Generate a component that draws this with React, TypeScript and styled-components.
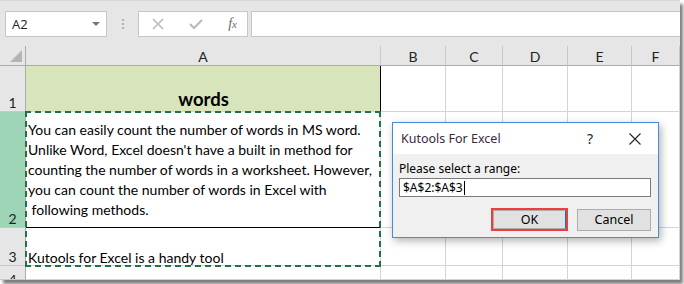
import styled, { createGlobalStyle } from 'styled-components'

const GlobalStyle = createGlobalStyle`
  html, body {
    margin: 0;
    padding: 0;
    background: #ffffff;
    overflow: hidden;
  }
  * { box-sizing: border-box; }
`

const columns = [
  { key: 'A', width: 355 },
  { key: 'B', width: 65 },
  { key: 'C', width: 57 },
  { key: 'D', width: 65 },
  { key: 'E', width: 64 },
  { key: 'F', width: 48 },
]

const rows = [
  { num: '1', height: 46 },
  { num: '2', height: 116 },
  { num: '3', height: 38 },
  { num: '4', height: 14 },
]

export default function App() {
  return (
    <>
      <GlobalStyle />
      <Frame>
        <Window>
          <FormulaBar>
            <NameBox>
              <span>A2</span>
              <DropArrow />
            </NameBox>
            <Grip>
              <i />
              <i />
              <i />
            </Grip>
            <IconBox>
              <svg width="12" height="12" viewBox="0 0 12 12">
                <path d="M1 1 L11 11 M11 1 L1 11" stroke="#b9b9b9" strokeWidth="1.5" fill="none" />
              </svg>
              <svg width="14" height="12" viewBox="0 0 14 12">
                <path d="M1 6 L5 10 L13 2" stroke="#b9b9b9" strokeWidth="2" fill="none" />
              </svg>
              <Fx>
                f<sub>x</sub>
              </Fx>
            </IconBox>
            <FormulaInput />
          </FormulaBar>

          <Sheet>
            <Corner $row={1} $col={1}>
              <svg width="12" height="12" viewBox="0 0 12 12">
                <path d="M12 0 L12 12 L0 12 Z" fill="#b4b4b4" />
              </svg>
            </Corner>
            {columns.map((c, ci) => (
              <ColHeader key={c.key} $row={1} $col={ci + 2}>
                {c.key}
              </ColHeader>
            ))}

            {rows.map((r, ri) => (
              <RowGroup key={r.num} num={r.num} row={ri + 2} />
            ))}

            <Marquee />
          </Sheet>

          <Dialog>
            <DialogTitle>
              <span>Kutools For Excel</span>
              <TitleButtons>
                <span>?</span>
                <svg width="12" height="12" viewBox="0 0 12 12">
                  <path d="M0.5 0.5 L11.5 11.5 M11.5 0.5 L0.5 11.5" stroke="#222" strokeWidth="1.1" fill="none" />
                </svg>
              </TitleButtons>
            </DialogTitle>
            <DialogBody>
              <Label>Please select a range:</Label>
              <RangeInput>
                $A$2:$A$3<Caret />
              </RangeInput>
              <ButtonRow>
                <Highlight>
                  <DialogButton $primary>OK</DialogButton>
                </Highlight>
                <DialogButton>Cancel</DialogButton>
              </ButtonRow>
            </DialogBody>
          </Dialog>
        </Window>
      </Frame>
    </>
  )
}

function RowGroup({ num, row }: { num: string; row: number }) {
  return (
    <>
      <RowHeader $row={row} $col={1} $selected={num === '2'} $clipped={num === '4'}>
        {num}
      </RowHeader>
      {columns.map((c, ci) => {
        const col = ci + 2
        if (c.key === 'A' && num === '1') {
          return (
            <TitleCell key={c.key} $row={row} $col={col}>
              words
            </TitleCell>
          )
        }
        if (c.key === 'A' && num === '2') {
          return (
            <TextCell key={c.key} $row={row} $col={col} $bottomLine $pad={7}>
              <p>You can easily count the number of words in MS word.</p>
              <p>Unlike Word, Excel doesn't have a built in method for</p>
              <p>counting the number of words in a worksheet. However,</p>
              <p>you can count the number of words in Excel with</p>
              <p>&nbsp;following methods.</p>
            </TextCell>
          )
        }
        if (c.key === 'A' && num === '3') {
          return (
            <TextCell key={c.key} $row={row} $col={col} $pad={0}>
              <SingleLine>Kutools for Excel is a handy tool</SingleLine>
            </TextCell>
          )
        }
        return <Cell key={c.key} $row={row} $col={col} $leftDark={c.key === 'B' && num === '1'} />
      })}
    </>
  )
}

type At = { $row: number; $col: number }

const Frame = styled.div`
  width: 684px;
  height: 284px;
  position: relative;
`

const Window = styled.div`
  width: 680px;
  height: 280px;
  position: relative;
  background: #e6e6e6;
  border-top: 1px solid #d6d6d6;
  box-shadow: 3px 4px 3px #7f7f7f;
  overflow: hidden;
  font-family: Lato, 'Liberation Sans', sans-serif;
`

const FormulaBar = styled.div`
  height: 45px;
  display: flex;
  align-items: flex-start;
  padding: 10px 0 0 5px;
  background: #e6e6e6;
`

const NameBox = styled.div`
  width: 102px;
  height: 26px;
  background: #fff;
  border: 1px solid #c6c6c6;
  display: flex;
  align-items: center;
  justify-content: space-between;
  padding: 0 6px 0 6px;
  font-family: 'Open Sans', sans-serif;
  font-size: 13px;
  color: #222;
`

const DropArrow = styled.span`
  width: 0;
  height: 0;
  border-left: 4px solid transparent;
  border-right: 4px solid transparent;
  border-top: 4px solid #777;
`

const Grip = styled.div`
  width: 31px;
  height: 26px;
  display: flex;
  flex-direction: column;
  align-items: center;
  justify-content: center;
  gap: 2px;

  i {
    width: 2px;
    height: 2px;
    background: #b0b0b0;
  }
`

const IconBox = styled.div`
  width: 110px;
  height: 26px;
  background: #fff;
  border: 1px solid #c6c6c6;
  display: flex;
  align-items: center;
  justify-content: space-between;
  padding: 0 10px 0 13px;
`

const Fx = styled.span`
  font-family: 'Liberation Serif', serif;
  font-style: italic;
  font-size: 14px;
  color: #6a6a6a;

  sub {
    font-size: 11px;
    vertical-align: 0;
  }
`

const FormulaInput = styled.div`
  margin-left: 3px;
  flex: 1;
  height: 26px;
  background: #fff;
  border: 1px solid #c6c6c6;
  border-right: none;
`

const Sheet = styled.div`
  display: grid;
  grid-template-columns: 26px ${columns.map((c) => c.width + 'px').join(' ')};
  grid-template-rows: 20px ${rows.map((r) => r.height + 'px').join(' ')};
  background: #fff;
`

const Placed = styled.div<At>`
  grid-row: ${({ $row }) => $row};
  grid-column: ${({ $col }) => $col};
  min-height: 0;
  overflow: hidden;
`

const Corner = styled(Placed)`
  background: #e6e6e6;
  border-right: 1px solid #ababab;
  border-bottom: 1px solid #ababab;
  display: flex;
  align-items: flex-end;
  justify-content: flex-end;
  padding: 0 3px 3px 0;
`

const ColHeader = styled(Placed)`
  background: #e6e6e6;
  border-right: 1px solid #c8c8c8;
  border-bottom: 1px solid #ababab;
  display: flex;
  align-items: center;
  justify-content: center;
  font-size: 14px;
  color: #222;
  padding-top: 2px;
`

const RowHeader = styled(Placed)<{ $selected?: boolean; $clipped?: boolean }>`
  background: ${({ $selected }) => ($selected ? '#9fd5b7' : '#e6e6e6')};
  border-right: 1px solid #ababab;
  border-bottom: 1px solid #c8c8c8;
  display: flex;
  align-items: ${({ $clipped }) => ($clipped ? 'flex-start' : 'flex-end')};
  justify-content: center;
  font-size: 14px;
  line-height: 16px;
  color: #222;
  padding-top: ${({ $clipped }) => ($clipped ? '6px' : '0')};
`

const Cell = styled(Placed)<{ $leftDark?: boolean }>`
  border-right: 1px solid #d4d4d4;
  border-bottom: 1px solid #d4d4d4;
  border-left: ${({ $leftDark }) => ($leftDark ? '1px solid #000' : 'none')};
  margin-left: ${({ $leftDark }) => ($leftDark ? '-1px' : '0')};
`

const TitleCell = styled(Placed)`
  background: #d8e4bc;
  border-bottom: 1px solid #d4d4d4;
  display: flex;
  align-items: flex-end;
  justify-content: center;
  padding-bottom: 1px;
  font-weight: 700;
  font-size: 18.5px;
  color: #000;
`

const TextCell = styled(Placed)<{ $bottomLine?: boolean; $pad: number }>`
  border-right: 1px solid #d4d4d4;
  border-bottom: 1px solid ${({ $bottomLine }) => ($bottomLine ? '#000' : '#d4d4d4')};
  display: flex;
  flex-direction: column;
  justify-content: flex-end;
  padding: 0 0 ${({ $pad }) => $pad}px 2px;
  font-size: 14px;
  line-height: 20px;
  color: #000;
  white-space: nowrap;

  p {
    margin: 0;
  }
`

const SingleLine = styled.p`
  line-height: 14px;
`

const Marquee = styled.div`
  grid-column: 2;
  grid-row: 3 / 5;
  margin: -1px 0 -1px -1px;
  border: 2px dashed #217346;
  pointer-events: none;
`

const Dialog = styled.div`
  position: absolute;
  left: 392px;
  top: 121px;
  width: 267px;
  height: 116px;
  background: #f0f0f0;
  border: 1px solid #3e8ede;
  box-shadow: 2px 3px 8px rgba(0, 0, 0, 0.3);
  font-family: 'Noto Sans', sans-serif;
  font-size: 12px;
  color: #000;
  display: flex;
  flex-direction: column;
`

const DialogTitle = styled.div`
  height: 31px;
  background: #fff;
  display: flex;
  align-items: center;
  justify-content: space-between;
  padding: 0 17px 0 8px;
  font-size: 12.5px;
  color: #3a2a3a;
`

const TitleButtons = styled.div`
  display: flex;
  align-items: center;
  gap: 36px;
  font-size: 14px;
  color: #222;
`

const DialogBody = styled.div`
  flex: 1;
  padding: 6px 7px 0 6px;
  display: flex;
  flex-direction: column;
`

const Label = styled.div`
  height: 18px;
  line-height: 18px;
`

const RangeInput = styled.div`
  height: 19px;
  background: #fff;
  border: 1px solid #7a7a7a;
  display: flex;
  align-items: center;
  padding-left: 3px;
  font-size: 12px;
`

const Caret = styled.span`
  width: 1px;
  height: 14px;
  background: #000;
  margin-left: 1px;
`

const ButtonRow = styled.div`
  display: flex;
  justify-content: flex-end;
  align-items: center;
  gap: 9px;
  margin-top: 11px;
`

const Highlight = styled.div`
  border: 2px solid #f03c3c;
  display: flex;
`

const DialogButton = styled.div<{ $primary?: boolean }>`
  width: ${({ $primary }) => ($primary ? '73px' : '74px')};
  height: ${({ $primary }) => ($primary ? '19px' : '22px')};
  background: #e1e1e1;
  border: 1px solid #adadad;
  border-right-color: ${({ $primary }) => ($primary ? '#0078d7' : '#adadad')};
  display: flex;
  align-items: center;
  justify-content: center;
  font-size: 12.5px;
`
